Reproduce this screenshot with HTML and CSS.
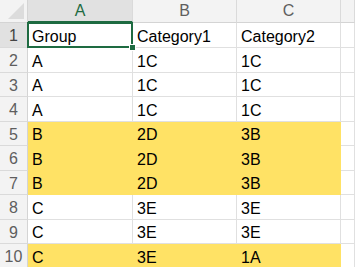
FILE: index.html
```html
<!DOCTYPE html>
<html lang="en">
<head>
    <meta charset="UTF-8">
    <title>Sheet1</title>
    <link rel="stylesheet" href="styles.css">
</head>
<body>
    <div class="sheet">
        <div class="corner"></div>
        <div class="col-head active">A</div>
        <div class="col-head">B</div>
        <div class="col-head">C</div>
        <div class="col-head"></div>

        <div class="row-head active">1</div>
        <div class="cell selected">Group</div>
        <div class="cell">Category1</div>
        <div class="cell">Category2</div>
        <div class="cell"></div>

        <div class="row-head">2</div>
        <div class="cell">A</div>
        <div class="cell">1C</div>
        <div class="cell">1C</div>
        <div class="cell"></div>

        <div class="row-head">3</div>
        <div class="cell">A</div>
        <div class="cell">1C</div>
        <div class="cell">1C</div>
        <div class="cell"></div>

        <div class="row-head">4</div>
        <div class="cell">A</div>
        <div class="cell">1C</div>
        <div class="cell">1C</div>
        <div class="cell"></div>

        <div class="row-head">5</div>
        <div class="cell fill">B</div>
        <div class="cell fill">2D</div>
        <div class="cell fill">3B</div>
        <div class="cell"></div>

        <div class="row-head">6</div>
        <div class="cell fill">B</div>
        <div class="cell fill">2D</div>
        <div class="cell fill">3B</div>
        <div class="cell"></div>

        <div class="row-head">7</div>
        <div class="cell fill">B</div>
        <div class="cell fill">2D</div>
        <div class="cell fill">3B</div>
        <div class="cell"></div>

        <div class="row-head">8</div>
        <div class="cell">C</div>
        <div class="cell">3E</div>
        <div class="cell">3E</div>
        <div class="cell"></div>

        <div class="row-head">9</div>
        <div class="cell">C</div>
        <div class="cell">3E</div>
        <div class="cell">3E</div>
        <div class="cell"></div>

        <div class="row-head">10</div>
        <div class="cell fill">C</div>
        <div class="cell fill">3E</div>
        <div class="cell fill">1A</div>
        <div class="cell"></div>
    </div>
</body>
</html>
```

FILE: styles.css
```css
body {
    margin: 0;
    background: #fff;
    font-family: 'Liberation Sans', Arial, sans-serif;
    overflow: hidden;
}

.sheet {
    display: grid;
    grid-template-columns: 28px 105px 104px 104px 1fr;
    grid-template-rows: 23px 25px 25px 24px 25px 24px 25px 24px 25px 24px 25px;
    width: 355px;
}

.corner,
.col-head,
.row-head,
.cell {
    box-sizing: border-box;
    border-right: 1px solid #e0e0e0;
    border-bottom: 1px solid #e0e0e0;
}

.corner {
    background: #f3f3f3;
    border-color: #d4d4d4;
    position: relative;
}

.corner::after {
    content: "";
    position: absolute;
    right: 3px;
    bottom: 3px;
    border-left: 16px solid transparent;
    border-bottom: 16px solid #dcdcdc;
}

.col-head {
    background: #f3f3f3;
    border-right-color: #dadada;
    border-bottom-color: #d4d4d4;
    color: #5e5e5e;
    font-size: 16px;
    display: flex;
    align-items: center;
    justify-content: center;
}

.col-head.active {
    background: #e1e1e1;
    color: #1e6b41;
    border-bottom: 2px solid #1e6b41;
}

.row-head {
    background: #f3f3f3;
    border-right-color: #d4d4d4;
    border-bottom-color: #dadada;
    color: #5e5e5e;
    font-size: 16px;
    padding-top: 2px;
    display: flex;
    align-items: center;
    justify-content: center;
}

.row-head.active {
    background: #e1e1e1;
    color: #444;
}

.cell {
    font-size: 16px;
    color: #000;
    padding: 3px 0 0 4px;
    display: flex;
    align-items: center;
    white-space: nowrap;
}

.cell.fill {
    background: #ffe265;
    border-color: #ffe265;
}

.cell.selected {
    position: relative;
}

.cell.selected::before {
    content: "";
    position: absolute;
    left: -1px;
    top: -1px;
    right: -1px;
    bottom: -1px;
    border: 2px solid #1e6b41;
}

.cell.selected::after {
    content: "";
    position: absolute;
    right: -4px;
    bottom: -4px;
    width: 5px;
    height: 5px;
    background: #1e6b41;
    border: 1px solid #fff;
}
```
